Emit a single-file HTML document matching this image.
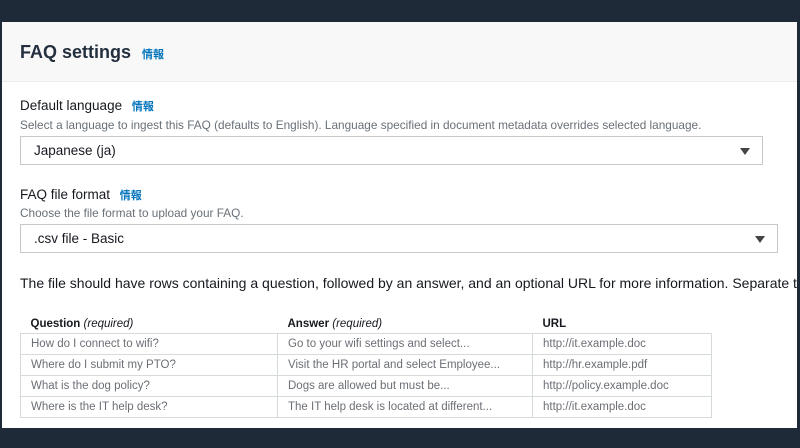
<!DOCTYPE html>
<html><head><meta charset="utf-8"><style>
*{margin:0;padding:0;box-sizing:border-box}
body{width:800px;height:448px;background:#1f2a38;position:relative;overflow:hidden;font-family:"Liberation Sans","Noto Sans CJK JP",sans-serif;color:#16191f}
.panel{position:absolute;left:2px;top:22px;width:795px;height:406px;background:#fff;overflow:hidden}
.hdr{position:absolute;left:0;top:0;width:100%;height:60px;background:#f8f8f8;border-bottom:1px solid #eaeded}
.abs{position:absolute;white-space:nowrap}
.info{color:#0073bb;font-size:11px;font-weight:bold}
.sel{position:absolute;border:1px solid #c6c6cd;height:29px;background:#fff;font-size:13.5px;padding:6px 0 0 13px}
.tri{position:absolute;right:12px;top:11px;width:0;height:0;border-left:5px solid transparent;border-right:5px solid transparent;border-top:7px solid #444}
table{position:absolute;left:18px;top:289px;border-collapse:collapse;font-size:11.5px}
td{border:1px solid #d5dbdb;height:21px;padding:0 10px;color:#6b6f75}
th{text-align:left;font-weight:bold;padding:0 10px 3px;height:22px;font-size:11.5px;vertical-align:bottom}
th i{font-weight:normal}
</style></head><body>
<div class="panel">
<div class="hdr"></div>
<div class="abs" style="left:18px;top:20px;font-size:18px;font-weight:bold;color:#232f3e">FAQ settings <span class="info" style="margin-left:6px">情報</span></div>
<div class="abs" style="left:18px;top:76px;font-size:13.5px">Default language <span class="info" style="margin-left:6px">情報</span></div>
<div class="abs" style="left:18px;top:96px;font-size:11.8px;color:#687078">Select a language to ingest this FAQ (defaults to English). Language specified in document metadata overrides selected language.</div>
<div class="sel" style="left:18px;top:114px;width:743px">Japanese (ja)<div class="tri"></div></div>
<div class="abs" style="left:18px;top:165px;font-size:13.5px">FAQ file format <span class="info" style="margin-left:6px">情報</span></div>
<div class="abs" style="left:18px;top:184px;font-size:11.8px;color:#687078">Choose the file format to upload your FAQ.</div>
<div class="sel" style="left:18px;top:202px;width:758px">.csv file - Basic<div class="tri"></div></div>
<div class="abs" style="left:18px;top:253px;font-size:14px">The file should have rows containing a question, followed by an answer, and an optional URL for more information. Separate the</div>
<table>
<tr><th style="width:257px">Question <i>(required)</i></th><th style="width:255px">Answer <i>(required)</i></th><th style="width:179px">URL</th></tr>
<tr><td>How do I connect to wifi?</td><td>Go to your wifi settings and select...</td><td>http://it.example.doc</td></tr>
<tr><td>Where do I submit my PTO?</td><td>Visit the HR portal and select Employee...</td><td>http://hr.example.pdf</td></tr>
<tr><td>What is the dog policy?</td><td>Dogs are allowed but must be...</td><td>http://policy.example.doc</td></tr>
<tr><td>Where is the IT help desk?</td><td>The IT help desk is located at different...</td><td>http://it.example.doc</td></tr>
</table>
</div>
</body></html>
